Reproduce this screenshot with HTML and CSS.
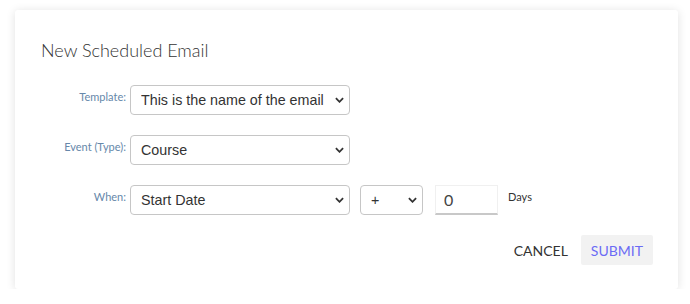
FILE: index.html
```html
<!DOCTYPE html>
<html>
<head>
    <meta charset="UTF-8">
    <meta name="viewport" content="width=device-width, initial-scale=1.0">
    <title>New Scheduled Email</title>
    <link rel="stylesheet" href="styles.css">
</head>
<body>
    <div class="page">
        <div class="dialog">
            <h2 class="dialog-title">New Scheduled Email</h2>

            <form class="schedule-form">
                <div class="form-row">
                    <label class="field-label">Template:</label>
                    <div class="select-wrap wide">
                        <select class="field-select">
                            <option>This is the name of the email template</option>
                        </select>
                        <svg class="chevron" viewBox="0 0 10 6"><polyline points="1,1 5,5 9,1"/></svg>
                    </div>
                </div>

                <div class="form-row">
                    <label class="field-label">Event (Type):</label>
                    <div class="select-wrap wide">
                        <select class="field-select">
                            <option>Course</option>
                        </select>
                        <svg class="chevron" viewBox="0 0 10 6"><polyline points="1,1 5,5 9,1"/></svg>
                    </div>
                </div>

                <div class="form-row">
                    <label class="field-label">When:</label>
                    <div class="select-wrap wide">
                        <select class="field-select">
                            <option>Start Date</option>
                        </select>
                        <svg class="chevron" viewBox="0 0 10 6"><polyline points="1,1 5,5 9,1"/></svg>
                    </div>
                    <div class="select-wrap small">
                        <select class="field-select">
                            <option>+</option>
                        </select>
                        <svg class="chevron" viewBox="0 0 10 6"><polyline points="1,1 5,5 9,1"/></svg>
                    </div>
                    <input class="days-input" type="text" value="0">
                    <span class="unit-label">Days</span>
                </div>

                <div class="form-actions">
                    <button type="button" class="btn btn-cancel">Cancel</button>
                    <button type="button" class="btn btn-submit">Submit</button>
                </div>
            </form>
        </div>
    </div>
</body>
</html>
```

FILE: styles.css
```css
body {
    margin: 0;
    padding: 0;
    background-color: white;
    font-family: Lato, "Open Sans", sans-serif;
    color: #333;
}

.page {
    padding: 10px 12px 0 15px;
}

.dialog {
    background: white;
    border-radius: 3px;
    box-shadow: 0 1px 10px rgba(0, 0, 0, 0.12);
    padding: 29px 25px 24px 26px;
}

.dialog-title {
    margin: 0 0 23px 0;
    font-size: 18px;
    line-height: 23px;
    font-weight: 300;
    color: #333;
}

.form-row {
    display: flex;
    align-items: flex-start;
    margin-bottom: 20px;
}

.form-row:last-of-type {
    margin-bottom: 0;
}

.field-label {
    width: 85px;
    padding-right: 4px;
    padding-top: 4px;
    text-align: right;
    font-size: 11px;
    line-height: 15px;
    color: #6688aa;
}

.select-wrap {
    position: relative;
}

.select-wrap.wide {
    width: 220px;
}

.select-wrap.small {
    width: 63px;
    margin-left: 10px;
}

.field-select {
    appearance: none;
    -webkit-appearance: none;
    width: 100%;
    height: 30px;
    box-sizing: border-box;
    border: 1px solid #c6c6c6;
    border-radius: 4px;
    background: white;
    padding: 0 24px 0 10px;
    font-family: "Liberation Sans", Arial, sans-serif;
    font-size: 14.3px;
    color: #333;
}

.chevron {
    position: absolute;
    right: 6px;
    top: 12px;
    width: 9px;
    height: 6px;
    fill: none;
    stroke: #333;
    stroke-width: 2;
    pointer-events: none;
}

.days-input {
    width: 63px;
    height: 30px;
    box-sizing: border-box;
    margin-left: 12px;
    border: 1px solid #f0f0f0;
    border-bottom: 2px solid #c8c8c8;
    padding: 0 8px;
    font-family: Lato, sans-serif;
    font-size: 16px;
    color: #444;
    outline: none;
}

.unit-label {
    margin-left: 10px;
    padding-top: 4px;
    font-size: 11px;
    line-height: 15px;
    color: #333;
}

.form-actions {
    display: flex;
    justify-content: flex-end;
    gap: 3px;
    margin-top: 19px;
}

.btn {
    height: 30px;
    padding: 0 10px;
    border: none;
    border-radius: 2px;
    background: transparent;
    font-family: Lato, sans-serif;
    font-size: 14px;
    text-transform: uppercase;
    cursor: pointer;
}

.btn-cancel {
    color: #333;
}

.btn-submit {
    background: #f2f2f2;
    color: #6b6bf5;
}
```
